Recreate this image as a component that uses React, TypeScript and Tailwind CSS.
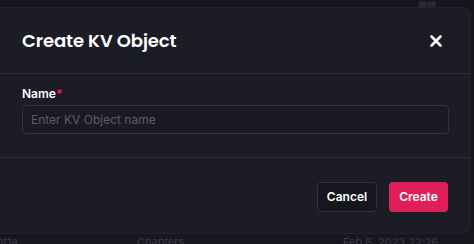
import React from "react";

export default function App() {
  return (
    <div className="relative w-[474px] h-[244px] overflow-hidden bg-[#15151c]" style={{ fontFamily: "Inter, 'Noto Sans', sans-serif" }}>
      {/* background page content (faint) */}
      <div className="absolute left-0 right-0 top-[232px] h-[12px] bg-[#17171e]">
        <span className="absolute left-[-3px] top-[2px] text-[11px] text-[#3a3a48]">nt1a</span>
        <span className="absolute left-[137px] top-[2px] text-[11px] text-[#3a3a48]">Chapters</span>
        <span className="absolute left-[343px] top-[2px] text-[11px] text-[#3a3a48]">Feb 6, 2023 22:26</span>
      </div>
      <div className="absolute left-[418px] top-[-3px] flex gap-[6px] text-[10px] text-[#33333f]">
        <span>▦▦</span>
      </div>

      {/* modal */}
      <div className="absolute left-[-12px] top-[7px] w-[483px] h-[227px] rounded-[8px] bg-[#1c1c26] border border-[#22222d] flex flex-col">
        <div className="h-[66px] flex items-center justify-between pl-[33px] pr-[28px] border-b border-[#2d2d39]">
          <h2 className="text-[18px] font-semibold text-white tracking-[-0.1px]" style={{ fontFamily: "Poppins, Inter, sans-serif" }}>Create KV Object</h2>
          <svg width="12" height="12" viewBox="0 0 12 12" className="text-white">
            <path d="M1.5 1.5 L10.5 10.5 M10.5 1.5 L1.5 10.5" stroke="currentColor" strokeWidth="2.6" strokeLinecap="round" />
          </svg>
        </div>
        <div className="h-[84px] pl-[33px] pr-[22px] pt-[12px] border-b border-[#2d2d39]">
          <label className="block text-[12px] font-semibold text-white leading-[16px]">
            Name<span className="text-[#e0245e]">*</span>
          </label>
          <div className="mt-[3px] h-[29px] w-[427px] rounded-[4px] border border-[#33333f] bg-[#1a1a24] flex items-center px-[8px]">
            <span className="text-[12px] text-[#5c5c6a]">Enter KV Object name</span>
          </div>
        </div>
        <div className="flex-1 flex justify-end items-start gap-[12px] pr-[22px] pt-[24px]">
          <button className="h-[30px] w-[60px] rounded-[4px] border border-[#33333f] bg-[#16161e] text-[12px] font-semibold text-white">Cancel</button>
          <button className="h-[30px] w-[59px] rounded-[4px] bg-[#e01e5a] text-[12px] font-semibold text-white">Create</button>
        </div>
      </div>
    </div>
  );
}
